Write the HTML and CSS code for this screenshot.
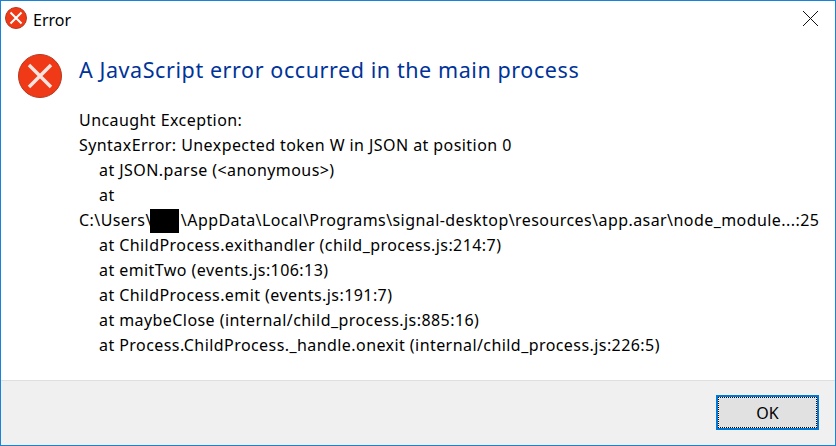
FILE: index.html
```html
<!DOCTYPE html>
<html lang="en">

<head>
    <meta charset="UTF-8">
    <title>Error</title>
    <link rel="stylesheet" href="styles.css">
</head>

<body>

    <div class="dialog">
        <div class="titlebar">
            <svg class="title-icon" viewBox="0 0 22 22">
                <circle cx="11" cy="11" r="10.5" fill="#f03a17" stroke="#b5391f" stroke-width="1"/>
                <path d="M5.5 5.5 L16.5 16.5 M16.5 5.5 L5.5 16.5" stroke="#fff" stroke-width="2" fill="none"/>
            </svg>
            <span class="title-text">Error</span>
            <svg class="close-icon" viewBox="0 0 15 15">
                <path d="M0 0 L15 15 M15 0 L0 15" stroke="#111" stroke-width="1" fill="none"/>
            </svg>
        </div>

        <div class="content">
            <svg class="error-icon" viewBox="0 0 44 44">
                <circle cx="22" cy="22" r="21.5" fill="#f03a17" stroke="#b5391f" stroke-width="1"/>
                <path d="M11 11 L33 33 M33 11 L11 33" stroke="#fbe4df" stroke-width="3.4" fill="none"/>
            </svg>
            <div class="message">
                <h1 class="heading">A JavaScript error occurred in the main process</h1>
                <div class="details">
                    <div>Uncaught Exception:</div>
                    <div>SyntaxError: Unexpected token W in JSON at position 0</div>
                    <div class="indent">at JSON.parse (&lt;anonymous&gt;)</div>
                    <div class="indent">at</div>
                    <div>C:\Users\<span class="redacted"></span>\AppData\Local\Programs\signal-desktop\resources\app.asar\node_module...:25</div>
                    <div class="indent">at ChildProcess.exithandler (child_process.js:214:7)</div>
                    <div class="indent">at emitTwo (events.js:106:13)</div>
                    <div class="indent">at ChildProcess.emit (events.js:191:7)</div>
                    <div class="indent">at maybeClose (internal/child_process.js:885:16)</div>
                    <div class="indent">at Process.ChildProcess._handle.onexit (internal/child_process.js:226:5)</div>
                </div>
            </div>
        </div>

        <div class="footer">
            <button class="ok-btn"><span class="ok-inner">OK</span></button>
        </div>
    </div>

</body>

</html>
```

FILE: styles.css
```css
* {
    box-sizing: border-box;
}

body {
    margin: 0;
    font-family: "Noto Sans", "Open Sans", sans-serif;
    background: #fff;
}

.dialog {
    width: 836px;
    height: 446px;
    border: 1px solid #1883d7;
    display: flex;
    flex-direction: column;
    background: #fff;
    color: #000;
}

.titlebar {
    height: 34px;
    display: flex;
    align-items: center;
    padding: 0 17px 0 4px;
    flex-shrink: 0;
}

.title-icon {
    width: 22px;
    height: 22px;
}

.title-text {
    margin: 4px 0 0 6px;
    font-size: 16px;
    flex: 1;
}

.close-icon {
    width: 15px;
    height: 15px;
    margin-top: 1px;
}

.content {
    flex: 1;
    display: flex;
    padding: 19px 0 0 17px;
    min-height: 0;
}

.error-icon {
    width: 44px;
    height: 44px;
    flex-shrink: 0;
}

.message {
    margin-left: 17px;
    min-width: 0;
}

.heading {
    margin: 0;
    font-size: 21.5px;
    line-height: 32px;
    letter-spacing: 0.58px;
    font-weight: 400;
    color: #003399;
}

.details {
    margin-top: 22px;
    font-size: 16px;
    letter-spacing: 0.43px;
    line-height: 25px;
    white-space: nowrap;
}

.indent {
    padding-left: 20px;
}

.redacted {
    display: inline-block;
    width: 29px;
    height: 24px;
    margin: 0 2px 0 -2px;
    background: #000;
    vertical-align: -7px;
}

.footer {
    height: 65px;
    flex-shrink: 0;
    background: #f0f0f0;
    border-top: 1px solid #dfdfdf;
    display: flex;
    justify-content: flex-end;
    align-items: flex-start;
    padding: 14px 16px 0 0;
}

.ok-btn {
    width: 103px;
    height: 35px;
    padding: 0;
    border: 2px solid #0078d7;
    background: #fff;
    font: inherit;
    font-size: 16px;
    color: #000;
}

.ok-inner {
    display: flex;
    align-items: center;
    justify-content: center;
    height: 100%;
    border: 1px dotted #000;
    background: #e1e1e1;
    background-clip: padding-box;
}
```
